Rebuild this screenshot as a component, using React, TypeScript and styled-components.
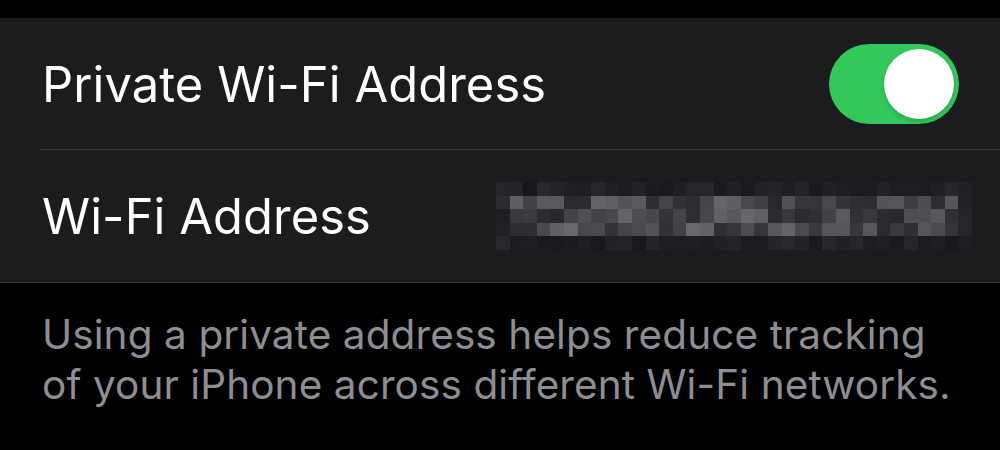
import React from 'react';
import styled, { createGlobalStyle } from 'styled-components';

const Global = createGlobalStyle`
  html, body {
    margin: 0;
    padding: 0;
    background: #000;
  }
  body {
    font-family: Inter, "Noto Sans", "Liberation Sans", sans-serif;
    -webkit-font-smoothing: antialiased;
  }
`;

const Page = styled.div`
  width: 1000px;
  height: 450px;
  padding-top: 18px;
  box-sizing: border-box;
  overflow: hidden;
  background: #000;
`;

const Group = styled.div`
  background: #1c1c1e;
  border-bottom: 1px solid #3a3a3c;
`;

const Row = styled.div<{ $divider?: boolean }>`
  position: relative;
  display: flex;
  align-items: center;
  justify-content: space-between;
  height: 132px;
  padding: 0 42px;
  box-sizing: border-box;

  ${(p) =>
    p.$divider &&
    `
    &::after {
      content: '';
      position: absolute;
      left: 40px;
      right: 0;
      bottom: 0;
      height: 1px;
      background: #3a3a3c;
    }
  `}
`;

const Label = styled.span`
  color: #fff;
  font-size: 48.8px;
  font-weight: 400;
  letter-spacing: 0.1px;
`;

const Track = styled.div<{ $on: boolean }>`
  display: flex;
  align-items: center;
  justify-content: ${(p) => (p.$on ? 'flex-end' : 'flex-start')};
  width: 130px;
  height: 80px;
  padding: 5px;
  box-sizing: border-box;
  border-radius: 40px;
  background: ${(p) => (p.$on ? '#32c85a' : '#39393d')};
  margin-right: -1px;
`;

const Knob = styled.div`
  width: 70px;
  height: 70px;
  border-radius: 50%;
  background: #fff;
  box-shadow: 0 2px 4px rgba(0, 0, 0, 0.2);
`;

const Footer = styled.p`
  margin: 0;
  padding: 27px 42px 0;
  color: #8d8d93;
  font-size: 40.5px;
  line-height: 50px;
  letter-spacing: 0.1px;
`;

// pixelated (hidden) MAC address
const COLS = 35;
const ROWS = 5;
const CELL = 13.6;

function shade(r: number, c: number) {
  const n = Math.sin(r * 91.7 + c * 37.3 + 11) * 43758.5453;
  const f = n - Math.floor(n);
  if (r === 0 || r === ROWS - 1) return 24 + Math.round(f * 16);
  if (c === 0 || c === COLS - 1) return 30 + Math.round(f * 14);
  return 40 + Math.round(f * 64);
}

const Masked = () => (
  <svg width={COLS * CELL} height={ROWS * CELL} shapeRendering="crispEdges" style={{ display: 'block', marginRight: '-14px' }}>
    {Array.from({ length: ROWS }).map((_, r) =>
      Array.from({ length: COLS }).map((__, c) => {
        const v = shade(r, c);
        return (
          <rect
            key={`${r}-${c}`}
            x={c * CELL}
            y={r * CELL}
            width={CELL + 0.5}
            height={CELL + 0.5}
            fill={`rgb(${v},${v},${v + 4})`}
          />
        );
      })
    )}
  </svg>
);

export default function App() {
  return (
    <Page>
      <Global />
      <Group>
        <Row $divider>
          <Label>Private Wi-Fi Address</Label>
          <Track $on>
            <Knob />
          </Track>
        </Row>
        <Row>
          <Label>Wi-Fi Address</Label>
          <Masked />
        </Row>
      </Group>
      <Footer>
        Using a private address helps reduce tracking
        <br />
        of your iPhone across different Wi-Fi networks.
      </Footer>
    </Page>
  );
}
